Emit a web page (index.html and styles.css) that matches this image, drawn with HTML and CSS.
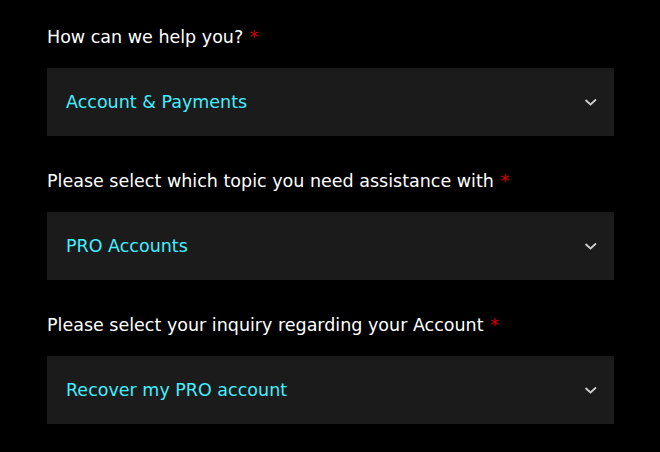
FILE: index.html
```html
<!DOCTYPE html>
<html>
<head>
<meta charset="utf-8">
<link rel="stylesheet" href="styles.css">
</head>
<body>
<form class="form">
  <div class="field">
    <label class="label">How can we help you? <span class="req">*</span></label>
    <div class="select"><span class="value">Account &amp; Payments</span>
      <svg class="chev" width="14" height="8" viewBox="0 0 14 8"><path d="M1.5 2 L6.5 6.5 L12 1.5" fill="none" stroke="#cfcfcf" stroke-width="1.8"/></svg>
    </div>
  </div>
  <div class="field">
    <label class="label">Please select which topic you need assistance with <span class="req">*</span></label>
    <div class="select"><span class="value">PRO Accounts</span>
      <svg class="chev" width="14" height="8" viewBox="0 0 14 8"><path d="M1.5 2 L6.5 6.5 L12 1.5" fill="none" stroke="#cfcfcf" stroke-width="1.8"/></svg>
    </div>
  </div>
  <div class="field">
    <label class="label">Please select your inquiry regarding your Account <span class="req">*</span></label>
    <div class="select"><span class="value">Recover my PRO account</span>
      <svg class="chev" width="14" height="8" viewBox="0 0 14 8"><path d="M1.5 2 L6.5 6.5 L12 1.5" fill="none" stroke="#cfcfcf" stroke-width="1.8"/></svg>
    </div>
  </div>
</form>
</body>
</html>
```
FILE: styles.css
```css
html, body {
  margin: 0;
  background: #000;
  font-family: "DejaVu Sans", "Liberation Sans", Arial, sans-serif;
}
.form {
  padding: 25px 0 0 47px;
  width: 567px;
  display: flex;
  flex-direction: column;
  gap: 33px;
}
.field {
  display: flex;
  flex-direction: column;
}
.label {
  color: #fff;
  font-size: 17.5px;
  line-height: 24px;
  margin-bottom: 19px;
}
.req {
  color: #d80000;
  margin-left: 1px;
}
.select {
  height: 68px;
  background: #1b1b1b;
  display: flex;
  align-items: center;
  justify-content: space-between;
  padding: 0 16px 0 19px;
}
.value {
  color: #44eeff;
  font-size: 17.5px;
}
.chev {
  display: block;
}
```
